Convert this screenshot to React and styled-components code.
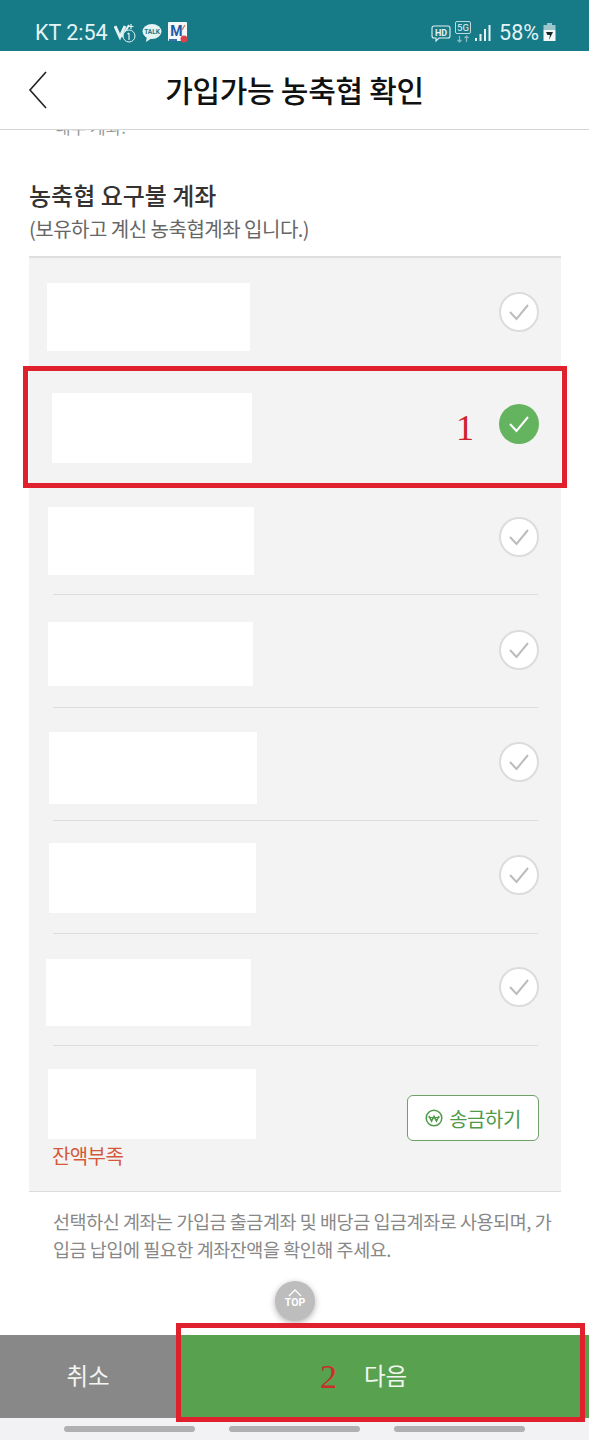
import React from "react";
import styled, { createGlobalStyle } from "styled-components";

const GlobalStyle = createGlobalStyle`
html, body {
    margin: 0;
    padding: 0;
    background: #fff;
}
* { box-sizing: border-box; }
`;

const KR = `"Noto Sans CJK KR", "Noto Sans", sans-serif`;

const Page = styled.div`
    position: relative;
    width: 589px;
    height: 1440px;
    display: flex;
    flex-direction: column;
    overflow: hidden;
    background: #fff;
    font-family: ${KR};
`;

const StatusBar = styled.div`
    height: 51px;
    flex: none;
    background: #167a87;
    color: #e4f3f4;
    display: flex;
    justify-content: space-between;
    align-items: center;
    padding: 14px 33px 0 35px;
    font-family: "Roboto", sans-serif;
    font-size: 21.5px;
`;

const StatusGroup = styled.div`
    display: flex;
    align-items: center;
    gap: ${(p) => p.$gap || 5}px;
`;

const Percent = styled.span`
    margin-left: 4px;
`;

const Header = styled.div`
    height: 79px;
    flex: none;
    display: flex;
    align-items: center;
    justify-content: center;
    position: relative;
    padding-bottom: 2px;
    border-bottom: 1px solid #d5d5d5;
`;

const BackButton = styled.div`
    position: absolute;
    left: 28px;
    top: 20px;
    line-height: 0;
`;

const Title = styled.div`
    font-size: 30px;
    font-weight: 500;
    color: #111;
    letter-spacing: -0.3px;
`;

const Main = styled.div`
    flex: 1;
    padding: 0 28px 0 29px;
`;

const ClippedLine = styled.div`
    height: 6px;
    overflow: hidden;
    padding-left: 26px;
    color: #999;
    font-size: 17px;
    line-height: 6px;
`;

const ClippedText = styled.span`
    display: block;
    margin-top: -6px;
`;

const SectionTitle = styled.div`
    margin-top: 42px;
    font-size: 24px;
    line-height: 34px;
    font-weight: 500;
    color: #333;
`;

const SectionSub = styled.div`
    margin-top: 2px;
    font-size: 20px;
    line-height: 30px;
    color: #666;
    letter-spacing: -0.5px;
`;

const Panel = styled.div`
    margin-top: 12px;
    background: #f3f3f3;
    border-top: 2px solid #dedede;
    border-bottom: 1px solid #dcdcdc;
`;

const Row = styled.div`
    height: ${(p) => p.$h}px;
    display: flex;
    justify-content: space-between;
    align-items: center;
    padding: 0 22px ${(p) => p.$pb || 0}px 0;
`;

const Masked = styled.div`
    align-self: flex-start;
    width: ${(p) => p.$w}px;
    height: ${(p) => p.$h}px;
    margin-left: ${(p) => p.$x}px;
    margin-top: ${(p) => p.$y}px;
    background: #fff;
`;

const Divider = styled.div`
    height: 1px;
    margin: 0 23px 0 24px;
    background: #dcdcdc;
`;

const Check = styled.div`
    width: 40px;
    height: 40px;
    border-radius: 50%;
    display: flex;
    align-items: center;
    justify-content: center;
    background: ${(p) => (p.$on ? "#64b45f" : "#fff")};
    border: ${(p) => (p.$on ? "none" : "2px solid #dcdcdc")};
`;

const LastRow = styled.div`
    height: 145px;
    padding: 23px 22px 0 0;
    display: flex;
    justify-content: space-between;
    align-items: flex-start;
`;

const LastLeft = styled.div`
    display: flex;
    flex-direction: column;
`;

const Shortage = styled.div`
    margin: 3px 0 0 23px;
    font-size: 20px;
    line-height: 28px;
    color: #d4593a;
    letter-spacing: -0.6px;
`;

const SendButton = styled.div`
    width: 132px;
    height: 46px;
    margin-top: 26px;
    background: #fff;
    border: 1.5px solid #6fa068;
    border-radius: 6px;
    display: flex;
    align-items: center;
    justify-content: center;
    gap: 6px;
    color: #4f9a49;
    font-size: 20px;
    letter-spacing: -0.5px;
`;

const Note = styled.div`
    padding: 15px 8px 0 24px;
    font-size: 18.5px;
    line-height: 28px;
    color: #888;
    letter-spacing: -0.45px;
    word-break: break-all;
`;

const TopButton = styled.div`
    position: absolute;
    left: 275px;
    top: 1281px;
    width: 40px;
    height: 40px;
    border-radius: 50%;
    background: #bdbdbd;
    box-shadow: 0 2px 6px rgba(0, 0, 0, 0.3);
    color: #fff;
    display: flex;
    flex-direction: column;
    align-items: center;
    padding-top: 8px;
    font-family: "Roboto", sans-serif;
    font-size: 10.5px;
    font-weight: 700;
    line-height: 11px;
`;

const ActionBar = styled.div`
    height: 83px;
    flex: none;
    display: grid;
    grid-template-columns: 176px 1fr;
`;

const ActionButton = styled.div`
    background: ${(p) => p.$bg};
    color: #f2f6f0;
    font-size: 23.5px;
    display: flex;
    align-items: center;
    justify-content: center;
    padding: 0 0 4px ${(p) => p.$pad || 0}px;
`;

const NavBar = styled.div`
    height: 22px;
    flex: none;
    background: #f2f2f4;
    display: flex;
    justify-content: center;
    gap: 34px;
    padding-top: 8px;
`;

const NavPill = styled.div`
    width: 131px;
    height: 6px;
    border-radius: 3px;
    background: #b0b0b2;
`;

const Annotation = styled.div`
    position: absolute;
    left: ${(p) => p.$x}px;
    top: ${(p) => p.$y}px;
    width: ${(p) => p.$w}px;
    height: ${(p) => p.$h}px;
    border: 5px solid #e0202c;
    pointer-events: none;
`;

const AnnotationNumber = styled.div`
    position: absolute;
    left: ${(p) => p.$x}px;
    top: ${(p) => p.$y}px;
    font-family: "Liberation Serif", serif;
    font-size: ${(p) => p.$size}px;
    line-height: 40px;
    color: ${(p) => p.$color};
`;

const CheckMark = ({ on }) => (
    <svg width="22" height="18" viewBox="0 0 22 18" fill="none">
        <path d="M2 9l6.5 7L20 2" stroke={on ? "#fff" : "#bcbcbc"} strokeWidth="2" />
    </svg>
);

const VoicemailIcon = () => (
    <svg width="22" height="22" viewBox="0 0 22 22" fill="none">
        <path d="M1 4l5 11 5-11" stroke="#e4f3f4" strokeWidth="3" />
        <path d="M8 15L15 3" stroke="#e4f3f4" strokeWidth="2" />
        <circle cx="15" cy="14" r="6" stroke="#e4f3f4" strokeWidth="1" fill="#167a87" />
        <path d="M15 11v7M13.5 12l1.5-1" stroke="#e4f3f4" strokeWidth="1.2" />
        <path d="M17 2v5M14.5 4.5h5" stroke="#e4f3f4" strokeWidth="1.2" />
    </svg>
);

const TalkIcon = () => (
    <svg width="20" height="20" viewBox="0 0 20 20">
        <ellipse cx="10" cy="8.5" rx="9.5" ry="7.5" fill="#e4f3f4" />
        <path d="M5 13l-1 6 6-4z" fill="#e4f3f4" />
        <text x="10" y="11" textAnchor="middle" fontSize="6.5" fontWeight="700" fontFamily="Roboto, sans-serif" fill="#167a87">TALK</text>
    </svg>
);

const MailIcon = () => (
    <svg width="20" height="22" viewBox="0 0 20 22">
        <rect x="0" y="0" width="19" height="19" rx="1" fill="#f4f8f8" />
        <rect x="1" y="17" width="8" height="2" fill="#3a6fb5" />
        <circle cx="16" cy="17" r="3.5" fill="#d8434b" />
        <text x="8.5" y="14" textAnchor="middle" fontSize="14" fontWeight="700" fontFamily="Roboto, sans-serif" fill="#1f5aa8">M</text>
        <path d="M14 8l3-5" stroke="#d8734b" strokeWidth="1.2" />
    </svg>
);

const HdIcon = () => (
    <svg width="20" height="20" viewBox="0 0 20 20" fill="none">
        <path d="M3 3h14a2 2 0 012 2v8a2 2 0 01-2 2H8l-3 3v-3H3a2 2 0 01-2-2V5a2 2 0 012-2z" stroke="#e4f3f4" strokeWidth="1.1" />
        <text x="10" y="12.5" textAnchor="middle" fontSize="9" fontWeight="700" fontFamily="Roboto, sans-serif" fill="#e4f3f4">HD</text>
    </svg>
);

const FiveGIcon = () => (
    <svg width="16" height="24" viewBox="0 0 16 24" fill="none">
        <rect x="0.5" y="0.5" width="15" height="12" rx="1.5" stroke="#e4f3f4" strokeWidth="0.8" />
        <text x="8" y="10" textAnchor="middle" fontSize="9.5" fontFamily="Roboto, sans-serif" fill="#e4f3f4">5G</text>
        <path d="M4.5 15v6M2.5 19l2 2 2-2" stroke="#8bbcc3" strokeWidth="1.2" />
        <path d="M11.5 21v-6M9.5 17l2-2 2 2" stroke="#8bbcc3" strokeWidth="1.2" />
    </svg>
);

const SignalIcon = () => (
    <svg width="16" height="18" viewBox="0 0 16 18" fill="#e4f3f4">
        <rect x="0" y="14" width="2" height="3" />
        <rect x="4.5" y="10" width="2" height="7" />
        <rect x="9" y="5" width="2" height="12" />
        <rect x="13.5" y="1" width="2" height="16" />
    </svg>
);

const BatteryIcon = () => (
    <svg width="13" height="20" viewBox="0 0 13 20">
        <rect x="4" y="0" width="5" height="2" fill="#9cc6cb" />
        <rect x="0.5" y="2" width="12" height="5" fill="#9cc6cb" />
        <rect x="0.5" y="7" width="12" height="11" fill="#f2f8f8" />
        <path d="M3 9h7L6 17l1-5H4.5z" fill="#17262a" />
    </svg>
);

const BackIcon = () => (
    <svg width="20" height="38" viewBox="0 0 20 38" fill="none">
        <path d="M18 1L2 19l16 18" stroke="#222" strokeWidth="1.6" />
    </svg>
);

const WonIcon = () => (
    <svg width="18" height="18" viewBox="0 0 18 18" fill="none" stroke="#4f9a49">
        <circle cx="9" cy="9" r="7.8" strokeWidth="1.5" />
        <path d="M4 7l2.5 5L9 7.5l2.5 4.5L14 7" strokeWidth="1.6" />
        <path d="M3.5 8.5h11" strokeWidth="1" />
    </svg>
);

const accounts = [
    { h: 108, x: 18, y: 25, bw: 203, bh: 68 },
    { h: 116, x: 23, y: 27, bw: 200, bh: 70, on: true },
    { h: 112, pb: 2, x: 19, y: 25, bw: 206, bh: 68, line: true },
    { h: 112, pb: 2, x: 19, y: 27, bw: 205, bh: 64, line: true },
    { h: 112, pb: 4, x: 20, y: 24, bw: 208, bh: 72, line: true },
    { h: 112, pb: 4, x: 20, y: 22, bw: 207, bh: 70, line: true },
    { h: 111, pb: 5, x: 17, y: 25, bw: 205, bh: 67, line: true },
];

const App = () => {
    return (
        <Page>
            <GlobalStyle />
            <StatusBar>
                <StatusGroup $gap={6}>
                    <span>KT 2:54</span>
                    <VoicemailIcon />
                    <TalkIcon />
                    <MailIcon />
                </StatusGroup>
                <StatusGroup $gap={4}>
                    <HdIcon />
                    <FiveGIcon />
                    <SignalIcon />
                    <Percent>58%</Percent>
                    <BatteryIcon />
                </StatusGroup>
            </StatusBar>
            <Header>
                <BackButton><BackIcon /></BackButton>
                <Title>가입가능 농축협 확인</Title>
            </Header>
            <Main>
                <ClippedLine><ClippedText>내부 계좌.</ClippedText></ClippedLine>
                <SectionTitle>농축협 요구불 계좌</SectionTitle>
                <SectionSub>(보유하고 계신 농축협계좌 입니다.)</SectionSub>
                <Panel>
                    {accounts.map((a, i) => (
                        <React.Fragment key={i}>
                            {a.line && i > 2 && <Divider />}
                            <Row $h={a.h} $pb={a.pb}>
                                <Masked $x={a.x} $y={a.y} $w={a.bw} $h={a.bh} />
                                <Check $on={a.on}><CheckMark on={a.on} /></Check>
                            </Row>
                        </React.Fragment>
                    ))}
                    <Divider />
                    <LastRow>
                        <LastLeft>
                            <Masked $x={19} $y={0} $w={208} $h={70} />
                            <Shortage>잔액부족</Shortage>
                        </LastLeft>
                        <SendButton><WonIcon />송금하기</SendButton>
                    </LastRow>
                </Panel>
                <Note>선택하신 계좌는 가입금 출금계좌 및 배당금 입금계좌로 사용되며, 가입금 납입에 필요한 계좌잔액을 확인해 주세요.</Note>
            </Main>
            <TopButton>
                <svg width="16" height="8" viewBox="0 0 16 8" fill="none">
                    <path d="M2 7l6-6 6 6" stroke="#fff" strokeWidth="1.3" />
                </svg>
                TOP
            </TopButton>
            <ActionBar>
                <ActionButton $bg="#888888">취소</ActionButton>
                <ActionButton $bg="#58a14f" $pad={6}>다음</ActionButton>
            </ActionBar>
            <NavBar>
                <NavPill />
                <NavPill />
                <NavPill />
            </NavBar>
            <Annotation $x={23} $y={366} $w={544} $h={122}>
                <AnnotationNumber $x={428} $y={37} $size={36} $color="#d0242c">1</AnnotationNumber>
            </Annotation>
            <Annotation $x={176} $y={1323} $w={409} $h={99}>
                <AnnotationNumber $x={139} $y={29} $size={34} $color="#c8302a">2</AnnotationNumber>
            </Annotation>
        </Page>
    );
};

export default App;
